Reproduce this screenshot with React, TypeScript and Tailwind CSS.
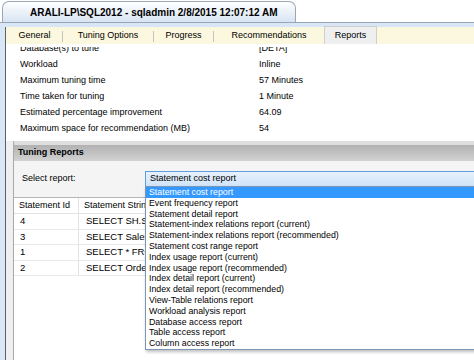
import React from "react";

const summary = [
  ["Database(s) to tune", "[DETA]"],
  ["Workload", "Inline"],
  ["Maximum tuning time", "57 Minutes"],
  ["Time taken for tuning", "1 Minute"],
  ["Estimated percentage improvement", "64.09"],
  ["Maximum space for recommendation (MB)", "54"],
];

const reports = [
  "Statement cost report",
  "Event frequency report",
  "Statement detail report",
  "Statement-index relations report (current)",
  "Statement-index relations report (recommended)",
  "Statement cost range report",
  "Index usage report (current)",
  "Index usage report (recommended)",
  "Index detail report (current)",
  "Index detail report (recommended)",
  "View-Table relations report",
  "Workload analysis report",
  "Database access report",
  "Table access report",
  "Column access report",
];

const statements = [
  ["4", "SELECT SH.SalesOrderID, SD.OrderQty FROM Sales"],
  ["3", "SELECT SalesOrderID FROM Sales.SalesOrderHeader"],
  ["1", "SELECT * FROM Sales.SalesOrderDetail"],
  ["2", "SELECT OrderDate FROM Sales.SalesOrderHeader"],
];

function Tab({ label, w }: { label: string; w: string }) {
  return (
    <div className={`${w} flex shrink-0 items-center justify-center`}>
      <span>{label}</span>
    </div>
  );
}

function Sep() {
  return <div className="mt-[4px] h-[11px] w-px shrink-0 bg-[#c4c4c4]" />;
}

export default function App() {
  return (
    <div className="relative h-[360px] w-[474px] overflow-hidden bg-white font-['Liberation_Sans',Arial,sans-serif] text-[9px] text-black">
      {/* title tab */}
      <div className="flex h-[22px] items-end bg-white">
        <div className="ml-[2px] flex h-[21px] w-[294px] shrink-0 items-center rounded-t-[7px] border border-b-0 border-[#9ba7b7] bg-gradient-to-b from-white to-[#d8e4f2] pl-[27px] text-[10px] font-bold">
          {"ARALI-LP\\SQL2012 - sqladmin 2/8/2015 12:07:12 AM"}
        </div>
      </div>

      <div className="flex h-[338px] border-t border-[#97a5b7] bg-[#d8e6f5] pt-[4px]">
        <div className="w-[5px] shrink-0" />
        <div className="flex min-w-0 flex-1 flex-col border-l border-[#5d6068] bg-white">
          {/* tab strip */}
          <div className="flex h-[17px] shrink-0 bg-[#fbf8df] pl-px">
            <Tab label="General" w="w-[55px]" />
            <Sep />
            <Tab label="Tuning Options" w="w-[90px]" />
            <Sep />
            <Tab label="Progress" w="w-[59px]" />
            <Sep />
            <Tab label="Recommendations" w="w-[110px]" />
            <div className="-mt-px flex h-[18px] w-[53px] shrink-0 items-center justify-center border border-b-0 border-[#cfcfcf] bg-[#efefef]">
              Reports
            </div>
          </div>

          {/* summary */}
          <div className="h-[97px] shrink-0 bg-white">
            <div className="mt-[3px] h-[94px] overflow-hidden">
              <div className="-mt-[6px]">
                {summary.map(([k, v]) => (
                  <div key={k} className="flex h-[16px] items-center pl-[14px]">
                    <span className="w-[239px] shrink-0">{k}</span>
                    <span>{v}</span>
                  </div>
                ))}
              </div>
            </div>
          </div>

          {/* tuning reports */}
          <div className="flex min-h-0 flex-1">
            <div className="w-[7px] shrink-0 bg-[#efefef]" />
            <div className="flex min-w-0 flex-1 flex-col overflow-hidden border-l border-[#a9a9a9] bg-[#f4f4f4]">
              <div className="h-[4px] shrink-0 bg-[#dedede]" />
              <div className="flex h-[16px] shrink-0 items-center bg-gradient-to-b from-[#b1b1b1] to-[#d2d2d2] pl-[4px] font-bold">
                Tuning Reports
              </div>
              <div className="flex h-[36px] shrink-0 items-center">
                <span className="w-[131px] shrink-0 pl-[8px]">Select report:</span>
                <div className="flex h-[17px] w-[340px] shrink-0 items-center border border-[#5e9ee0] bg-gradient-to-b from-[#e6f1fc] to-[#cfe3f8] pl-[4px]">
                  Statement cost report
                </div>
              </div>
              <div className="flex-1 border-t border-[#b5b5b5] bg-white">
                <div className="flex h-[16px] items-center border-b border-[#e3e3e3]">
                  <span className="flex h-full w-[65px] shrink-0 items-center border-r border-[#e3e3e3] pl-[5px]">Statement Id</span>
                  <span className="whitespace-nowrap pl-[5px]">Statement String</span>
                </div>
                {statements.map(([id, s]) => (
                  <div key={id} className="flex h-[15.5px] items-center border-b border-[#e8e8e8] text-[9.5px]">
                    <span className="flex h-full w-[65px] shrink-0 items-center border-r border-[#e3e3e3] pl-[6px]">{id}</span>
                    <span className="whitespace-nowrap pl-[7px]">{s}</span>
                  </div>
                ))}
              </div>
            </div>
          </div>
        </div>
      </div>

      {/* open dropdown list */}
      <div className="absolute left-[145px] top-[186px] w-[340px] border border-[#7b97b8] bg-white text-[8.8px] shadow-[1px_2px_3px_rgba(0,0,0,0.25)]">
        {reports.map((r, i) => (
          <div
            key={r}
            className={`h-[10.8px] whitespace-nowrap pl-[3px] leading-[10.8px] ${i === 0 ? "bg-[#3399ff] text-white" : ""}`}
          >
            {r}
          </div>
        ))}
      </div>
    </div>
  );
}
